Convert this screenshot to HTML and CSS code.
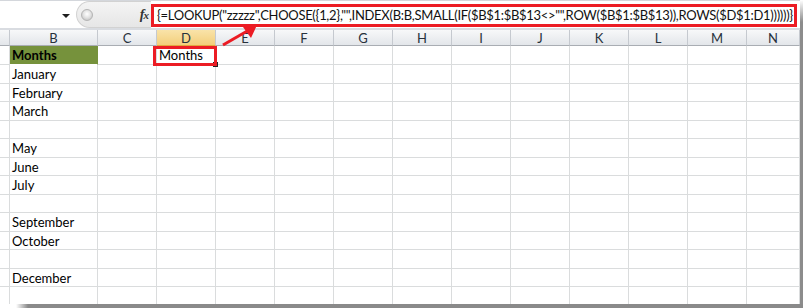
FILE: index.html
```html
<!DOCTYPE html>
<html>
<head>
<meta charset="utf-8">
<link rel="stylesheet" href="styles.css">
</head>
<body>
<div class="page">
  <div class="main">
    <div class="frame">
      <div class="fbar">
        <div class="namebox"><span class="dd"></span></div>
        <div class="pill"><span class="grip"></span><span class="fx">f<span class="fxx">x</span></span></div>
        <div class="formula">{=LOOKUP("zzzzz",CHOOSE({1,2},"",INDEX(B:B,SMALL(IF($B$1:$B$13&lt;&gt;"",ROW($B$1:$B$13)),ROWS($D$1:D1))))))}</div>
      </div>
      <div class="sep"></div>
      <div class="sheet">
        <div class="h"></div><div class="h">B</div><div class="h">C</div><div class="h sel">D</div><div class="h">E</div><div class="h">F</div><div class="h">G</div><div class="h">H</div><div class="h">I</div><div class="h">J</div><div class="h">K</div><div class="h">L</div><div class="h">M</div><div class="h">N</div>

        <div class="c"></div><div class="c g">Months</div><div class="c"></div><div class="c">Months</div><div class="c"></div><div class="c"></div><div class="c"></div><div class="c"></div><div class="c"></div><div class="c"></div><div class="c"></div><div class="c"></div><div class="c"></div><div class="c"></div>

        <div class="c"></div><div class="c">January</div><div class="c"></div><div class="c"></div><div class="c"></div><div class="c"></div><div class="c"></div><div class="c"></div><div class="c"></div><div class="c"></div><div class="c"></div><div class="c"></div><div class="c"></div><div class="c"></div>

        <div class="c"></div><div class="c">February</div><div class="c"></div><div class="c"></div><div class="c"></div><div class="c"></div><div class="c"></div><div class="c"></div><div class="c"></div><div class="c"></div><div class="c"></div><div class="c"></div><div class="c"></div><div class="c"></div>

        <div class="c"></div><div class="c">March</div><div class="c"></div><div class="c"></div><div class="c"></div><div class="c"></div><div class="c"></div><div class="c"></div><div class="c"></div><div class="c"></div><div class="c"></div><div class="c"></div><div class="c"></div><div class="c"></div>

        <div class="c"></div><div class="c"></div><div class="c"></div><div class="c"></div><div class="c"></div><div class="c"></div><div class="c"></div><div class="c"></div><div class="c"></div><div class="c"></div><div class="c"></div><div class="c"></div><div class="c"></div><div class="c"></div>

        <div class="c"></div><div class="c">May</div><div class="c"></div><div class="c"></div><div class="c"></div><div class="c"></div><div class="c"></div><div class="c"></div><div class="c"></div><div class="c"></div><div class="c"></div><div class="c"></div><div class="c"></div><div class="c"></div>

        <div class="c"></div><div class="c">June</div><div class="c"></div><div class="c"></div><div class="c"></div><div class="c"></div><div class="c"></div><div class="c"></div><div class="c"></div><div class="c"></div><div class="c"></div><div class="c"></div><div class="c"></div><div class="c"></div>

        <div class="c"></div><div class="c">July</div><div class="c"></div><div class="c"></div><div class="c"></div><div class="c"></div><div class="c"></div><div class="c"></div><div class="c"></div><div class="c"></div><div class="c"></div><div class="c"></div><div class="c"></div><div class="c"></div>

        <div class="c"></div><div class="c"></div><div class="c"></div><div class="c"></div><div class="c"></div><div class="c"></div><div class="c"></div><div class="c"></div><div class="c"></div><div class="c"></div><div class="c"></div><div class="c"></div><div class="c"></div><div class="c"></div>

        <div class="c"></div><div class="c">September</div><div class="c"></div><div class="c"></div><div class="c"></div><div class="c"></div><div class="c"></div><div class="c"></div><div class="c"></div><div class="c"></div><div class="c"></div><div class="c"></div><div class="c"></div><div class="c"></div>

        <div class="c"></div><div class="c">October</div><div class="c"></div><div class="c"></div><div class="c"></div><div class="c"></div><div class="c"></div><div class="c"></div><div class="c"></div><div class="c"></div><div class="c"></div><div class="c"></div><div class="c"></div><div class="c"></div>

        <div class="c"></div><div class="c"></div><div class="c"></div><div class="c"></div><div class="c"></div><div class="c"></div><div class="c"></div><div class="c"></div><div class="c"></div><div class="c"></div><div class="c"></div><div class="c"></div><div class="c"></div><div class="c"></div>

        <div class="c"></div><div class="c">December</div><div class="c"></div><div class="c"></div><div class="c"></div><div class="c"></div><div class="c"></div><div class="c"></div><div class="c"></div><div class="c"></div><div class="c"></div><div class="c"></div><div class="c"></div><div class="c"></div>

        <div class="c last"></div><div class="c last"></div><div class="c last"></div><div class="c last"></div><div class="c last"></div><div class="c last"></div><div class="c last"></div><div class="c last"></div><div class="c last"></div><div class="c last"></div><div class="c last"></div><div class="c last"></div><div class="c last"></div><div class="c last"></div>
      </div>
      <div class="handle"></div>
      <div class="d1box"></div>
      <svg class="arrow" width="50" height="30" viewBox="0 0 50 30">
        <line x1="8" y1="23" x2="34" y2="8" stroke="#ec1c24" stroke-width="3"/>
        <polygon points="42,3 28,5 36,16" fill="#ec1c24"/>
      </svg>
    </div>
    <div class="rshadow"></div>
  </div>
  <div class="bshadow"></div>
</div>
</body>
</html>
```

FILE: styles.css
```css
* { box-sizing: border-box; }
html, body { margin: 0; padding: 0; background: #ffffff; }
body { width: 803px; height: 308px; overflow: hidden; font-family: Lato, "Liberation Sans", sans-serif; }

.page { display: flex; flex-direction: column; width: 803px; height: 308px; }
.main { display: flex; height: 304px; }
.frame { position: relative; width: 800px; height: 304px; display: flex; flex-direction: column; background: #fff; }
.rshadow { width: 3px; height: 304px; background: linear-gradient(to bottom, #ffffff 0, #8c8c8c 22px, #8c8c8c 100%); }
.bshadow { height: 4px; width: 803px; background: linear-gradient(to right, #ffffff 0, #ffffff 16px, #8a8a8a 28px, #8a8a8a 100%); }

.fbar { height: 28px; display: flex; border-top: 1px solid #d4d7dc; background: #ffffff; }
.namebox { width: 76px; height: 27px; position: relative; background: #fff; display: flex; align-items: center; justify-content: flex-end; padding-right: 6px; }
.dd { width: 0; height: 0; border-left: 4px solid transparent; border-right: 4px solid transparent; border-top: 4px solid #1e1e1e; margin-top: 2px; }
.pill { width: 75px; height: 27px; display: flex; align-items: center; justify-content: space-between; padding: 0 1px 0 4px; background: linear-gradient(#f4f4f4, #e6e6e6); border-radius: 14px 0 0 14px; border: 1px solid #d2d2d2; border-right: none; }
.grip { width: 12px; height: 12px; border-radius: 50%; background: radial-gradient(circle at 50% 40%, #ffffff 0, #e4e4e4 45%, #b9b9b9 100%); border: 1px solid #b4b4b4; }
.fx { font-family: "Liberation Serif", serif; font-style: italic; font-weight: bold; font-size: 14px; color: #333; margin-right: 2px; letter-spacing: -1px; }
.fxx { font-size: 11px; }
.formula { flex: 1; height: 23px; margin: 3px 3px 0 0; border: 3px solid #ec1c24; font-size: 13px; letter-spacing: -0.3px; color: #111; padding-left: 3px; line-height: 17px; white-space: nowrap; overflow: hidden; }
.sep { height: 2px; background: #d9dce1; }

.sheet { display: grid; grid-template-columns: 10px 88px repeat(11, 59px) 53px; grid-template-rows: 16px 19px 19px 18px 19px 18px 19px 18px 19px 18px 19px 18px 19px 18px 17px; }
.h { background: linear-gradient(#f7f8f9, #e3e6ea); border-right: 1px solid #c5c9cf; border-bottom: 1px solid #a9adb3; font-size: 13px; color: #27313c; display: flex; align-items: center; justify-content: center; }
.h.sel { background: linear-gradient(#f9e3a9, #f3cf7b); border-bottom-color: #e1a83f; }
.c { border-right: 1px solid #dadcdd; border-bottom: 1px solid #dadcdd; font-size: 13px; color: #000; display: flex; align-items: center; padding-left: 2px; white-space: nowrap; }
.c.last { border-bottom: none; }
.c.g { background: #76923c; font-weight: bold; border-right-color: #76923c; border-bottom-color: #ffffff; }

.d1box { position: absolute; left: 153px; top: 46px; width: 64px; height: 20px; border: 3px solid #ec1c24; }
.handle { position: absolute; left: 213px; top: 62px; width: 5px; height: 5px; background: #222; }
.arrow { position: absolute; left: 215px; top: 22px; }
```
